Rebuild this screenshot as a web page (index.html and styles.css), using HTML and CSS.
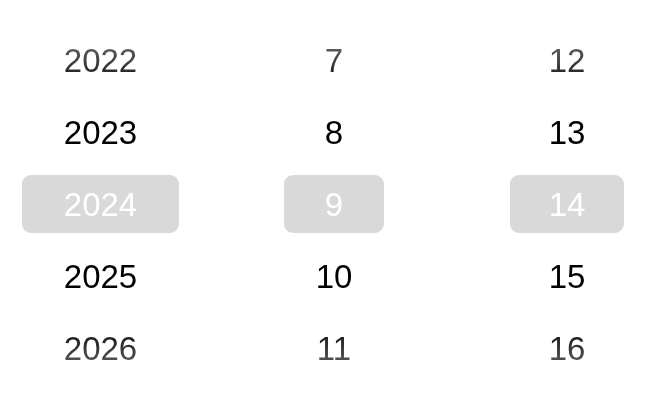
FILE: index.html
```html
<!DOCTYPE html>
<html>
<head>
    <title>Date Picker</title>
    <link rel="stylesheet" href="styles.css">
</head>
<body>
    <div class="picker">
        <div class="column col-year">
            <div class="item">2022</div>
            <div class="item">2023</div>
            <div class="item selected">2024</div>
            <div class="item">2025</div>
            <div class="item">2026</div>
        </div>
        <div class="column col-month">
            <div class="item">7</div>
            <div class="item">8</div>
            <div class="item selected">9</div>
            <div class="item">10</div>
            <div class="item">11</div>
        </div>
        <div class="column col-day">
            <div class="item">12</div>
            <div class="item">13</div>
            <div class="item selected">14</div>
            <div class="item">15</div>
            <div class="item">16</div>
        </div>
    </div>
</body>
</html>
```
FILE: styles.css
```css
body {
    margin: 0;
    background: #fff;
    font-family: "Liberation Sans", Arial, sans-serif;
}

.picker {
    display: flex;
    height: 416px;
    padding-top: 31px;
    box-sizing: border-box;
    -webkit-mask-image: linear-gradient(to bottom, rgba(0, 0, 0, 0.25) 0px, #000 92px, #000 324px, rgba(0, 0, 0, 0.2) 416px);
    mask-image: linear-gradient(to bottom, rgba(0, 0, 0, 0.25) 0px, #000 92px, #000 324px, rgba(0, 0, 0, 0.2) 416px);
}

.column {
    display: flex;
    flex-direction: column;
    gap: 14px;
}

.col-year {
    width: 157px;
    margin-left: 22px;
}

.col-month {
    width: 100px;
    margin-left: 105px;
}

.col-day {
    width: 114px;
    margin-left: 126px;
}

.item {
    height: 58px;
    line-height: 60px;
    text-align: center;
    font-size: 33px;
    color: #000;
    border-radius: 9px;
}

.item.selected {
    background-color: #d9d9d9;
    color: #fff;
}
```
